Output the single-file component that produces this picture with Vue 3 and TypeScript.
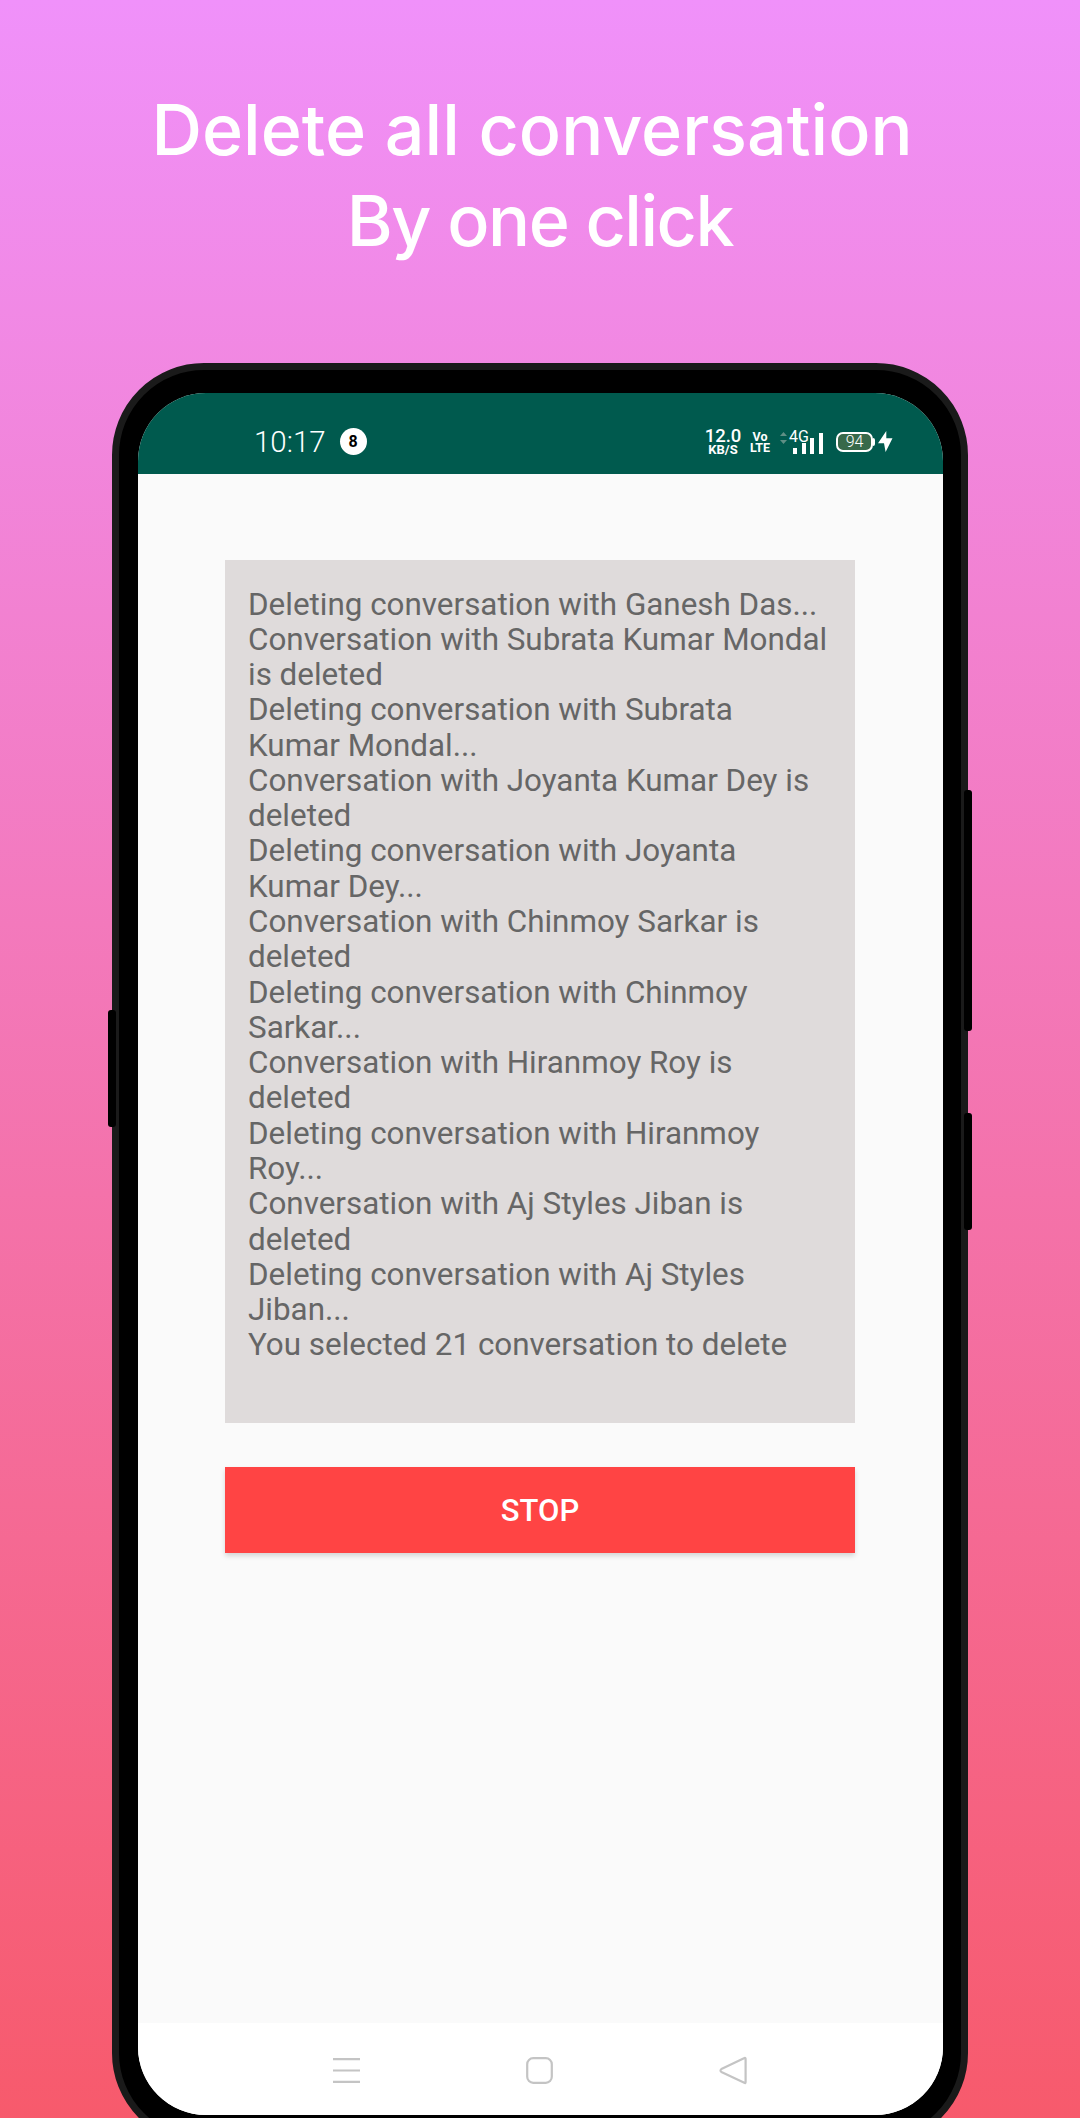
<script setup lang="ts">
const messages: string[] = [
  'Deleting conversation with Ganesh Das...',
  'Conversation with Subrata Kumar Mondal is deleted',
  'Deleting conversation with Subrata Kumar Mondal...',
  'Conversation with Joyanta Kumar Dey is deleted',
  'Deleting conversation with Joyanta Kumar Dey...',
  'Conversation with Chinmoy Sarkar is deleted',
  'Deleting conversation with Chinmoy Sarkar...',
  'Conversation with Hiranmoy Roy is deleted',
  'Deleting conversation with Hiranmoy Roy...',
  'Conversation with Aj Styles Jiban is deleted',
  'Deleting conversation with Aj Styles Jiban...',
  'You selected 21 conversation to delete',
]
const bars: number[] = [6, 11, 16, 21]
</script>

<template>
  <div class="page">
    <h1 class="title">
      <span class="title-first">Delete all conversation</span>
      <span class="title-second">By one click</span>
    </h1>
    <div class="phone">
      <i class="key key-left"></i>
      <i class="key key-right-a"></i>
      <i class="key key-right-b"></i>
      <div class="screen">
        <header class="status">
          <div class="status-left">
            <span class="time">10:17</span>
            <span class="badge">8</span>
          </div>
          <div class="status-right">
            <div class="speed"><b>12.0</b><small>KB/S</small></div>
            <div class="volte"><span>Vo</span><span>LTE</span></div>
            <div class="net">
              <svg class="arrows" width="7" height="12" viewBox="0 0 7 12">
                <path d="M3.5 0 7 4H0zM3.5 12 0 8h7z" fill="#5f8f85" />
              </svg>
              <span class="fourg">4G</span>
              <div class="bars">
                <i v-for="h in bars" :key="h" class="bar" :style="{ height: h + 'px' }"></i>
              </div>
            </div>
            <div class="battery"><span>94</span></div>
            <svg class="bolt" width="15" height="21" viewBox="0 0 15 21">
              <path d="M8.3 0 0 12.3h6L7.6 21 14.5 7.3H8.3z" fill="#fff" />
            </svg>
          </div>
        </header>
        <main class="content">
          <section class="log">
            <div v-for="(m, i) in messages" :key="i">{{ m }}</div>
          </section>
          <button class="stop" type="button">STOP</button>
        </main>
        <nav class="nav">
          <svg width="27" height="25" viewBox="0 0 27 25">
            <path d="M0 1.2h27M0 12.5h27M0 23.8h27" stroke="#c4c4c4" stroke-width="2.2" fill="none" />
          </svg>
          <svg width="27" height="27" viewBox="0 0 27 27">
            <rect x="1.2" y="1.2" width="24.6" height="24.6" rx="6" stroke="#c4c4c4" stroke-width="2.2" fill="none" />
          </svg>
          <svg width="28" height="29" viewBox="0 0 28 29">
            <path d="M25.5 2 Q26.6 1.4 26.6 3V26Q26.6 27.6 25.3 26.8L2.4 16Q0.6 14.5 2.4 13Z" stroke="#c4c4c4" stroke-width="2.2" fill="none" stroke-linejoin="round" />
          </svg>
        </nav>
      </div>
    </div>
  </div>
</template>

<style>
html, body { margin: 0; padding: 0; }
</style>

<style scoped>
.page {
  width: 1080px;
  height: 2118px;
  overflow: hidden;
  background: linear-gradient(180deg, #f091fa 0%, #f75a6c 100%);
  display: flex;
  flex-direction: column;
  align-items: center;
}
.title {
  margin: 84px 0 97px;
  flex: none;
  display: flex;
  flex-direction: column;
  align-items: center;
  color: #fff;
  font-family: Inter, "Noto Sans", sans-serif;
  font-weight: 500;
  font-size: 70px;
  line-height: 91px;
}
.title-first { margin-right: 16px; }
.title-second { letter-spacing: -1.5px; }
.phone {
  position: relative;
  width: 856px;
  height: 1782px;
  flex: none;
  box-sizing: border-box;
  padding: 23px 18px 23px 19px;
  border: 7px solid #1a1a1a;
  border-radius: 92px;
  background: #000;
}
.key {
  position: absolute;
  width: 8px;
  background: #000;
  border-radius: 3px;
}
.key-left { left: -11px; top: 640px; height: 117px; }
.key-right-a { right: -11px; top: 420px; height: 241px; }
.key-right-b { right: -11px; top: 743px; height: 117px; }
.screen {
  height: 100%;
  display: flex;
  flex-direction: column;
  overflow: hidden;
  border-radius: 68px;
  background: #fafafa;
  font-family: Roboto, sans-serif;
}
.status {
  flex: none;
  height: 81px;
  background: #005a4e;
  color: #fff;
  display: flex;
  justify-content: space-between;
  align-items: center;
  padding: 16px 50px 0 116px;
  box-sizing: border-box;
}
.status-left { display: flex; align-items: center; gap: 14px; }
.time { font-size: 29.5px; font-weight: 300; }
.badge {
  width: 27px;
  height: 27px;
  border-radius: 50%;
  background: #fff;
  color: #000;
  font-size: 16px;
  font-weight: 700;
  display: flex;
  align-items: center;
  justify-content: center;
}
.status-right { display: flex; align-items: center; }
.speed {
  width: 36px;
  display: flex;
  flex-direction: column;
  align-items: center;
  line-height: 1;
}
.speed b { font-size: 18.5px; font-weight: 500; line-height: 15px; }
.speed small { font-size: 13px; font-weight: 700; line-height: 11px; }
.volte {
  margin-left: 10px;
  width: 18px;
  display: flex;
  flex-direction: column;
  align-items: center;
  font-size: 12.5px;
  font-weight: 700;
  line-height: 11px;
}
.net {
  position: relative;
  margin-left: 11px;
  width: 44px;
  height: 24px;
}
.arrows { position: absolute; left: 0; top: 2px; }
.fourg { position: absolute; left: 9px; top: 0; font-size: 16px; font-weight: 400; line-height: 14px; }
.bars {
  position: absolute;
  left: 13px;
  bottom: 0;
  display: flex;
  align-items: flex-end;
  gap: 4.5px;
}
.bar { width: 4px; background: #fff; }
.battery {
  margin-left: 12px;
  width: 37px;
  height: 20px;
  box-sizing: border-box;
  border: 2px solid #fff;
  border-radius: 7px;
  background: #38694a;
  display: flex;
  align-items: center;
  justify-content: center;
  font-size: 16px;
  font-weight: 300;
  position: relative;
}
.battery::after {
  content: "";
  position: absolute;
  right: -4px;
  top: 4px;
  width: 2px;
  height: 8px;
  background: #fff;
  border-radius: 0 2px 2px 0;
}
.bolt { margin-left: 5px; }
.content {
  flex: 1;
  padding: 86px 88px 0 87px;
  box-sizing: border-box;
}
.log {
  height: 863px;
  box-sizing: border-box;
  padding: 26.5px 24px 0 23px;
  background: #dfdbdb;
  color: #666;
  font-size: 31.4px;
  line-height: 35.28px;
}
.stop {
  display: block;
  margin-top: 44px;
  width: 100%;
  height: 86px;
  border: 0;
  background: #ff4444;
  color: #fff;
  font-family: Roboto, sans-serif;
  font-size: 31px;
  font-weight: 500;
  box-shadow: 0 3px 5px rgba(0, 0, 0, 0.15);
}
.nav {
  flex: none;
  height: 92px;
  background: #fff;
  display: flex;
  align-items: center;
  justify-content: space-between;
  padding: 2px 196px 0 195px;
  box-sizing: border-box;
}
</style>
